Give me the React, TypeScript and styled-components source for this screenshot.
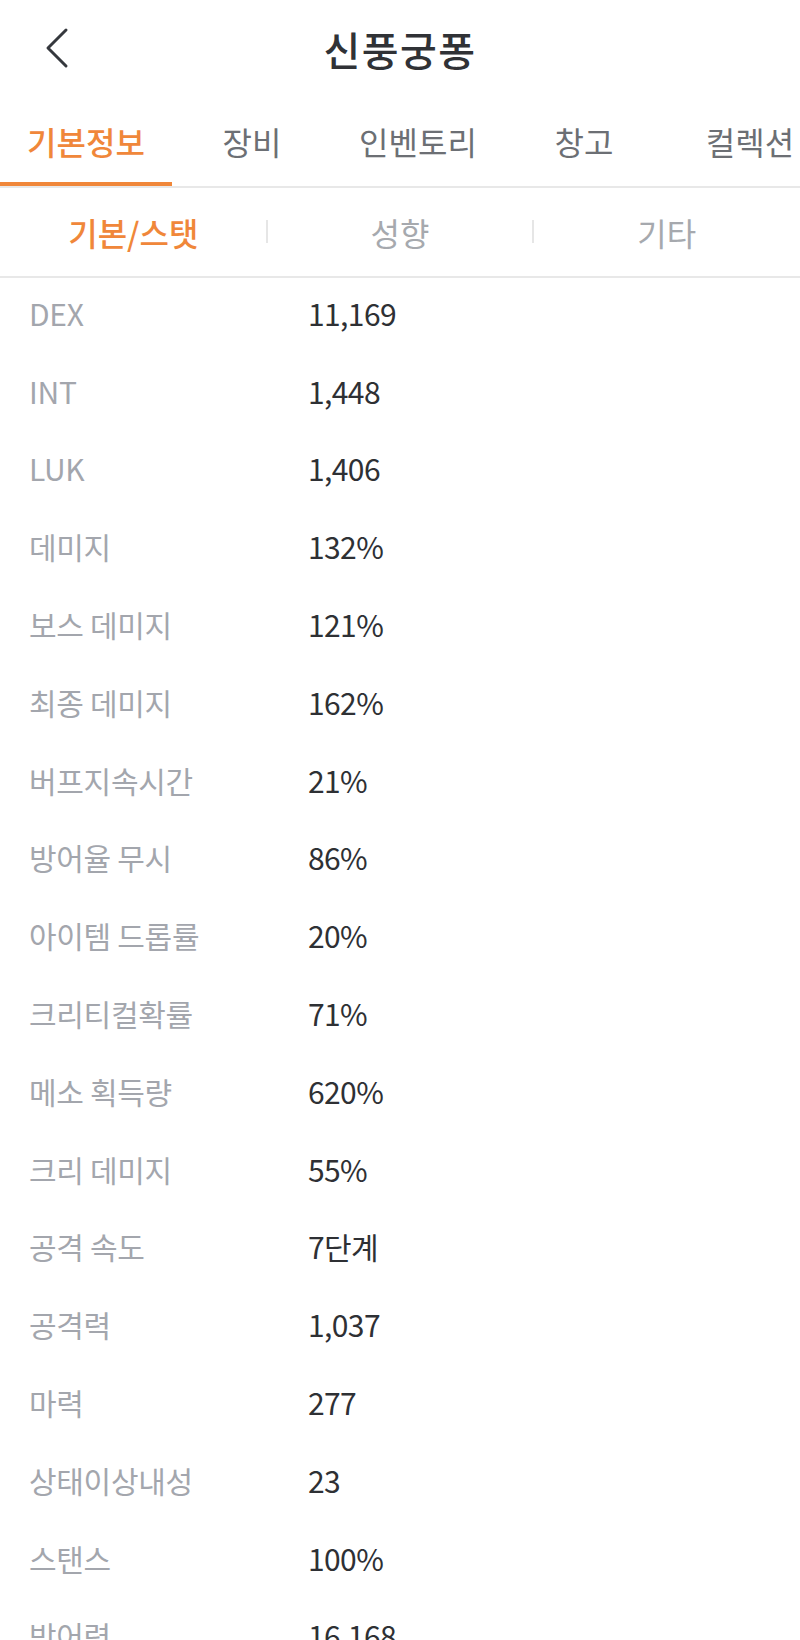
import React, { useState } from 'react';
import styled, { createGlobalStyle } from 'styled-components';

const GlobalStyle = createGlobalStyle`
  html, body {
    margin: 0;
    padding: 0;
    background: #ffffff;
    overflow: hidden;
  }
  body {
    font-family: "Noto Sans CJK KR", "Noto Sans", sans-serif;
  }
`;

const ORANGE = '#f0873a';

const Page = styled.div`
  width: 800px;
  height: 1640px;
  overflow: hidden;
  background: #fff;
`;

const Header = styled.header`
  position: relative;
  height: 100px;
  display: flex;
  align-items: center;
  justify-content: center;
`;

const BackButton = styled.button`
  position: absolute;
  left: 34px;
  top: 24px;
  width: 46px;
  height: 48px;
  padding: 0;
  border: 0;
  background: none;
  display: flex;
  align-items: center;
  justify-content: center;
`;

const Title = styled.h1`
  margin: 0 0 2px;
  font-size: 40px;
  font-weight: 500;
  color: #303236;
  letter-spacing: 1.5px;
`;

const TabBar = styled.nav`
  display: flex;
  height: 86px;
  overflow: hidden;
  border-bottom: 2px solid #e8e8e8;
`;

const Tab = styled.div<{ $active?: boolean }>`
  position: relative;
  flex: 0 0 166px;
  height: 82px;
  box-sizing: border-box;
  padding-left: 6px;
  display: flex;
  align-items: center;
  justify-content: center;
  font-size: 32px;
  font-weight: ${p => (p.$active ? 500 : 400)};
  color: ${p => (p.$active ? ORANGE : '#6c6f74')};
  white-space: nowrap;

  &::after {
    content: '';
    display: ${p => (p.$active ? 'block' : 'none')};
    position: absolute;
    left: 0;
    bottom: -6px;
    width: calc(100% + 6px);
    height: 6px;
    background: ${ORANGE};
  }
`;

const SubTabBar = styled.div`
  display: grid;
  grid-template-columns: repeat(3, 1fr);
  height: 88px;
  border-bottom: 2px solid #e8e8e8;
`;

const SubTab = styled.div<{ $active?: boolean; $divider?: boolean }>`
  display: flex;
  align-items: center;
  justify-content: center;
  font-size: 32px;
  font-weight: ${p => (p.$active ? 500 : 400)};
  color: ${p => (p.$active ? ORANGE : '#a6a9ae')};
  position: relative;

  &::before {
    content: '';
    display: ${p => (p.$divider ? 'block' : 'none')};
    position: absolute;
    left: -1px;
    top: 32px;
    width: 2px;
    height: 23px;
    background: #e6e6e6;
  }
`;

const StatList = styled.div`
  display: flex;
  flex-direction: column;
  margin-top: -4px;
`;

const StatRow = styled.div`
  display: flex;
  align-items: center;
  height: 77.8px;
  flex-shrink: 0;
  padding-left: 29px;
`;

const Label = styled.span`
  width: 279px;
  font-size: 30px;
  color: #a3a6ad;
  letter-spacing: -0.3px;
  white-space: nowrap;
`;

const Value = styled.span`
  font-size: 30px;
  color: #2e3034;
  letter-spacing: -0.6px;
  white-space: nowrap;
`;

const stats: [string, string][] = [
  ['DEX', '11,169'],
  ['INT', '1,448'],
  ['LUK', '1,406'],
  ['데미지', '132%'],
  ['보스 데미지', '121%'],
  ['최종 데미지', '162%'],
  ['버프지속시간', '21%'],
  ['방어율 무시', '86%'],
  ['아이템 드롭률', '20%'],
  ['크리티컬확률', '71%'],
  ['메소 획득량', '620%'],
  ['크리 데미지', '55%'],
  ['공격 속도', '7단계'],
  ['공격력', '1,037'],
  ['마력', '277'],
  ['상태이상내성', '23'],
  ['스탠스', '100%'],
  ['방어력', '16,168'],
  ['이동속도', '140%'],
];

const tabs = ['기본정보', '장비', '인벤토리', '창고', '컬렉션'];
const subTabs = ['기본/스탯', '성향', '기타'];

const ChevronLeft = () => (
  <svg width="26" height="42" viewBox="0 0 26 42" fill="none">
    <path d="M22 3 L4 21 L22 39" stroke="#35383d" strokeWidth="3" strokeLinecap="round" strokeLinejoin="round" />
  </svg>
);

export default function App() {
  const [tab, setTab] = useState(0);
  const [subTab, setSubTab] = useState(0);

  return (
    <Page>
      <GlobalStyle />
      <Header>
        <BackButton aria-label="뒤로">
          <ChevronLeft />
        </BackButton>
        <Title>신풍궁퐁</Title>
      </Header>
      <TabBar>
        {tabs.map((t, i) => (
          <Tab key={t} $active={i === tab} onClick={() => setTab(i)}>
            {t}
          </Tab>
        ))}
      </TabBar>
      <SubTabBar>
        {subTabs.map((t, i) => (
          <SubTab key={t} $active={i === subTab} $divider={i > 0} onClick={() => setSubTab(i)}>
            {t}
          </SubTab>
        ))}
      </SubTabBar>
      <StatList>
        {stats.map(([label, value]) => (
          <StatRow key={label}>
            <Label>{label}</Label>
            <Value>{value}</Value>
          </StatRow>
        ))}
      </StatList>
    </Page>
  );
}
